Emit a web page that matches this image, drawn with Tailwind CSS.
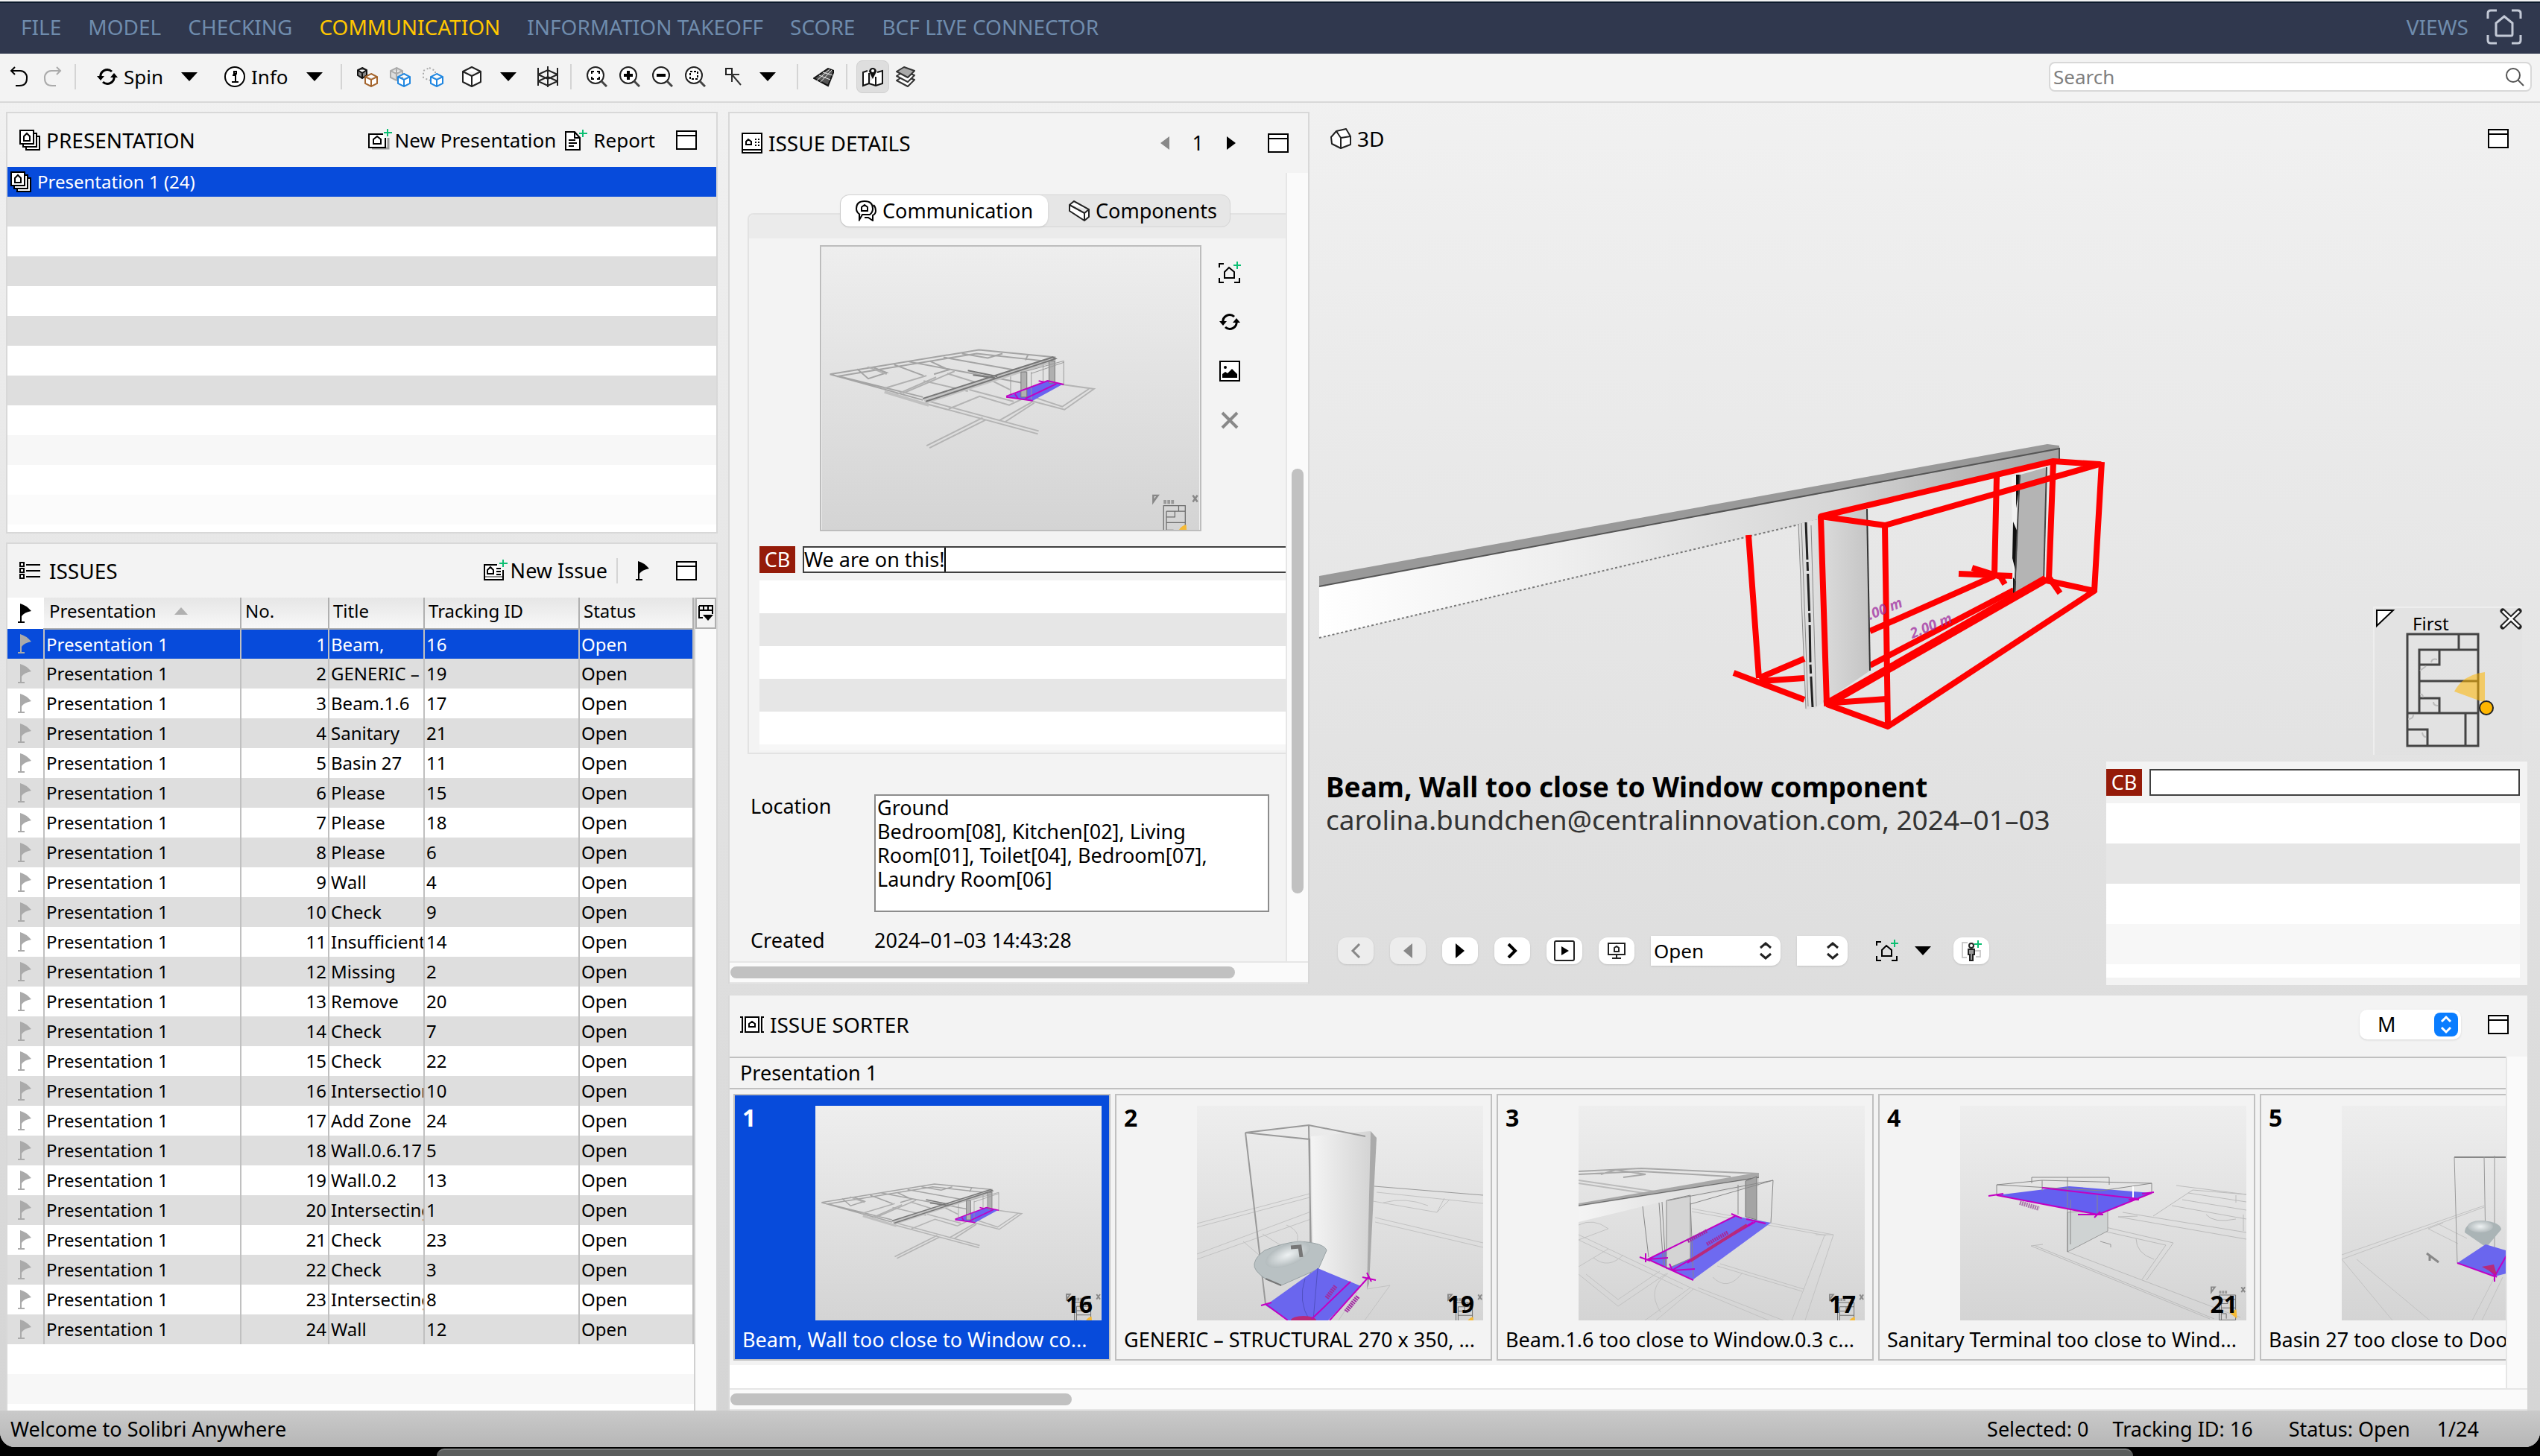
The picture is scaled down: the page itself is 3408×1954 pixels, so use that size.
<!DOCTYPE html>
<html lang="en">
<head>
    <meta charset="UTF-8">
    <meta name="viewport" content="width=device-width, initial-scale=1.0">
    <title>Solibri Anywhere - Communication</title>
    <script src="https://cdn.jsdelivr.net/npm/@tailwindcss/browser@4"></script>
</head>
<body class="bg-black font-['Noto_Sans','Open_Sans',sans-serif] text-[27px] leading-8 text-black">
    <!-- Icon sprite -->
    <svg class="hidden">
        <symbol id="caret" viewBox="0 0 22 12"><path d="M0 0h22L11 12z" fill="currentColor"/></symbol>
        <symbol id="window" viewBox="0 0 28 26"><path d="M1 1h26v24H1zM1 7h26" fill="#fff" stroke="#000" stroke-width="2"/></symbol>
        <symbol id="undo" viewBox="0 0 28 28"><path d="M8 1L3 6l5 5M3 6h12a9 9 0 0 1 9 10q0 10-10 10H9" fill="none" stroke="currentColor" stroke-width="2"/></symbol>
        <symbol id="refresh" viewBox="0 0 28 28"><g fill="none" stroke="currentColor" stroke-width="3"><path d="M5 15a9 9 0 0 1 15-8M23 13a9 9 0 0 1-15 8"/></g><path d="M0 13h10l-5 6zM18 15h10l-5-6z" fill="currentColor"/></symbol>
        <symbol id="info" viewBox="0 0 28 28"><circle cx="14" cy="14" r="13" fill="#fff" stroke="currentColor" stroke-width="2"/><path d="M13 7h3v3h-3zM11 12h4v9M10 21h9" fill="none" stroke="currentColor" stroke-width="2"/></symbol>
        <symbol id="box" viewBox="0 0 28 28"><path d="M14 1l12 6v14l-12 6-12-6V7zM2 7l12 6 12-6M14 13v14" fill="#fff" stroke="#222" stroke-width="2" stroke-linejoin="round"/></symbol>
        <symbol id="boxes-brown" viewBox="0 0 28 28"><path d="M7 2l6 3v7l-6 4-6-4V5zM1 5l6 4 6-4M7 9v7" fill="#888" stroke="#111" stroke-width="2"/><path d="M19 10l8 4v9l-8 4-8-4v-9zM11 14l8 4 8-4M19 18v9" fill="#fff" stroke="#a4642c" stroke-width="2"/></symbol>
        <symbol id="boxes-gray" viewBox="0 0 28 28"><path d="M9 2l8 4v9l-8 4-8-4V6zM1 6l8 4 8-4M9 2v17" fill="#ddd" stroke="#aaa" stroke-width="2"/><path d="M19 10l8 4v9l-8 4-8-4v-9zM11 14l8 4 8-4M19 18v9" fill="#fff" stroke="#1f86e0" stroke-width="2"/></symbol>
        <symbol id="boxes-dotted" viewBox="0 0 28 28"><path d="M9 2l8 4v9l-8 4-8-4V6z" fill="none" stroke="#aaa" stroke-width="2" stroke-dasharray="2 3"/><path d="M19 10l8 4v9l-8 4-8-4v-9zM11 14l8 4 8-4M19 18v9" fill="#fff" stroke="#1f86e0" stroke-width="2"/></symbol>
        <symbol id="section" viewBox="0 0 28 28"><path d="M1 2v24M27 2v24M14 0v28M1 11l13 6 13-6-13-6zM1 20l13 6 13-6M1 20l13-6 13 6" fill="none" stroke="#222" stroke-width="2"/></symbol>
        <symbol id="lens" viewBox="0 0 28 28"><circle cx="12" cy="12" r="11" fill="#fff" stroke="#222" stroke-width="2"/><path d="M20 20l7 7" stroke="#444" stroke-width="3"/></symbol>
        <symbol id="cursor" viewBox="0 0 28 28"><path d="M3 3h8v8H3z" fill="#fff" stroke="#222" stroke-width="2"/><path d="M11 11v10M10 11h11M11 11l12 14" fill="none" stroke="#333" stroke-width="2"/></symbol>
        <symbol id="wedge" viewBox="0 0 28 28"><path d="M1 16L20 3l8 3-8 20z" fill="#555" stroke="#111" stroke-width="2"/><path d="M8 12l15 6M13 8l13 4M10 21L25 5M5 19l17-15" stroke="#eee" stroke-width="1"/></symbol>
        <symbol id="map" viewBox="0 0 28 28"><path d="M7 6L1 8v18l8-3V9M9 23l9 3 9-3V6l-7 2M18 26V14" fill="#fff" stroke="#111" stroke-width="2"/><path d="M14 17L9 7a5 5 0 1 1 10 0z" fill="#111"/><circle cx="14" cy="6" r="2" fill="#fff"/></symbol>
        <symbol id="layers" viewBox="0 0 28 28"><g stroke="#333" stroke-width="2" stroke-linejoin="round"><path d="M2 19l10-6 14 5-9 9z" fill="#fff"/><path d="M2 13l10-6 14 5-9 9z" fill="#fff"/><path d="M2 7l10-6 14 5-9 9z" fill="#aaa"/></g></symbol>
        <symbol id="slides" viewBox="0 0 28 28"><g fill="#fff" stroke="#000" stroke-width="2"><path d="M9 9h18v18H9z"/><path d="M5 5h18v18H5z"/><path d="M1 1h18v18H1z"/><path d="M6 15V9l4-4 4 4v6z"/></g></symbol>
        <symbol id="slides-new" viewBox="0 0 32 30"><path d="M5 26h22V12" fill="none" stroke="#999" stroke-width="3"/><path d="M20 7H1v18h22V12" fill="#fff" stroke="#000" stroke-width="2"/><path d="M7 20v-6l5-4 5 4v6z" fill="none" stroke="#000" stroke-width="2"/><path d="M26 0v10M21 5h11" stroke="#0bbf72" stroke-width="2"/></symbol>
        <symbol id="report" viewBox="0 0 30 30"><path d="M13 4H1v24h19V12zM13 4v8h7" fill="#fff" stroke="#000" stroke-width="2"/><path d="M5 15h9M5 19h11M5 23h7" stroke="#000" stroke-width="2"/><path d="M24 1v10M19 6h11" stroke="#0bbf72" stroke-width="2"/></symbol>
        <symbol id="issue-new" viewBox="0 0 32 30"><path d="M18 7H1v20h25V14" fill="#fff" stroke="#000" stroke-width="2"/><path d="M5 19v-5l4-4 4 4v5zM17 12h6M17 16h6M17 20h6" fill="none" stroke="#000" stroke-width="2"/><path d="M2 23h23" stroke="#888" stroke-width="2"/><path d="M26 0v10M21 5h11" stroke="#0bbf72" stroke-width="2"/></symbol>
        <symbol id="issue" viewBox="0 0 28 28"><path d="M1 1h26v26H1zM1 23h26" fill="#fff" stroke="#000" stroke-width="2"/><path d="M6 16v-4l3-3 4 3v4z" fill="none" stroke="#000" stroke-width="2"/><path d="M18 9h2M22 9h2M18 13h2M22 13h2M18 17h2M22 17h2" stroke="#000" stroke-width="2"/></symbol>
        <symbol id="sorter" viewBox="0 0 32 22"><path d="M0 1h3v20H0M32 1h-3v20h3M7 1h18v20H7z" fill="#fff" stroke="#000" stroke-width="2"/><path d="M12 14v-4l4-3 4 3v4z" fill="none" stroke="#000" stroke-width="2"/></symbol>
        <symbol id="list" viewBox="0 0 28 24"><path d="M1 1h5v5H1zM1 9h5v5H1zM1 17h5v5H1z" fill="#fff" stroke="#000" stroke-width="2"/><path d="M9 4h19M9 12h19M9 20h19" stroke="#000" stroke-width="2"/></symbol>
        <symbol id="flag" viewBox="0 0 18 26"><path d="M3 0q8 2 15 10Q8 12 5 17l0 7h4v2H0v-2h3z" fill="currentColor"/></symbol>
        <symbol id="house" viewBox="0 0 30 30"><path d="M1 8V3h6M1 22v6h6M21 28h7v-6" fill="none" stroke="currentColor" stroke-width="2"/><path d="M8 22v-8l6-6 7 6v8z" fill="none" stroke="currentColor" stroke-width="2"/><path d="M25 0v10M20 5h10" stroke="#0bbf72" stroke-width="2"/></symbol>
        <symbol id="minimap" viewBox="0 0 50 47"><path d="M1 1h5L1 8zM43 1l5 7M48 1l-5 7" fill="none" stroke="#888" stroke-width="2"/><path d="M12 12h23v35H12zM15 18h20M15 18v29M15 30h20M24 18v6h-9M28 12v6M15 38h7v7" fill="none" stroke="#6a6a6a" stroke-width="1"/><path d="M37 45l-9-7q3-5 8-6z" fill="#f5b935"/><path d="M12 8h12" stroke="#999" stroke-width="4" stroke-dasharray="3 1"/></symbol>
    </svg>

    <div class="flex h-screen min-h-[1200px] flex-col">
    <div class="flex min-h-0 flex-1 flex-col overflow-hidden rounded-b-[20px] bg-linear-to-b from-[#f3f3f3] to-[#d4d4d4]">
        <!-- Menu bar -->
        <nav class="flex h-[72px] shrink-0 items-center gap-9 border-t-2 border-[#f3f3f3] bg-[#30384e] pr-6 pb-[2px] pl-7 text-[28px] text-[#6f8cad] shadow-[inset_0_2px_0_#0c1a2c]">
            <a href="#">FILE</a>
            <a href="#">MODEL</a>
            <a href="#">CHECKING</a>
            <a href="#" class="text-[#ffc700]">COMMUNICATION</a>
            <a href="#">INFORMATION TAKEOFF</a>
            <a href="#">SCORE</a>
            <a href="#">BCF LIVE CONNECTOR</a>
            <span class="flex-1"></span>
            <a href="#" class="-mr-3">VIEWS</a>
            <button aria-label="Views layout">
                <svg class="h-12 w-12" viewBox="0 0 48 48" fill="none" stroke="#c3c9d6" stroke-width="3"><path d="M2 13V6q0-4 4-4h8M34 2h8q4 0 4 4v7M2 35v7q0 4 4 4h8M34 46h8q4 0 4-4v-7M13 34V19l11-9 11 9v15q0 2-2 2H15q-2 0-2-2z"/></svg>
            </button>
        </nav>

        <!-- Toolbar -->
        <div class="flex h-[66px] shrink-0 items-center gap-4 border-b-2 border-[#d8d8d8] bg-[#f3f3f3] pr-[11px] pb-[2px] pl-3 text-[26px]">
            <button aria-label="Undo"><svg class="h-7 w-7"><use href="#undo"/></svg></button>
            <button aria-label="Redo" class="-scale-x-100 text-[#aaa]"><svg class="h-7 w-7"><use href="#undo"/></svg></button>
            <span class="h-[34px] w-[2px] bg-[#d4d4d4]"></span>
            <button class="ml-3 flex items-center gap-2"><svg class="h-7 w-7"><use href="#refresh"/></svg>Spin</button>
            <button aria-label="Spin menu" class="mr-9 ml-2"><svg class="h-3 w-[22px]"><use href="#caret"/></svg></button>
            <button class="-ml-4 flex items-center gap-2"><svg class="h-7 w-7"><use href="#info"/></svg>Info</button>
            <button aria-label="Info menu" class="ml-2"><svg class="h-3 w-[22px]"><use href="#caret"/></svg></button>
            <span class="ml-2 h-[34px] w-[2px] bg-[#d4d4d4]"></span>
            <button aria-label="Add to basket" class="ml-1"><svg class="h-7 w-7"><use href="#boxes-brown"/></svg></button>
            <button aria-label="Show selected"><svg class="h-7 w-7"><use href="#boxes-gray"/></svg></button>
            <button aria-label="Hide others"><svg class="h-7 w-7"><use href="#boxes-dotted"/></svg></button>
            <button aria-label="Projection" class="ml-2"><svg class="h-7 w-7"><use href="#box"/></svg></button>
            <button aria-label="Projection menu" class="ml-2"><svg class="h-3 w-[22px]"><use href="#caret"/></svg></button>
            <button aria-label="Sectioning" class="ml-3"><svg class="h-7 w-7"><use href="#section"/></svg></button>
            <span class="h-[34px] w-[2px] bg-[#d4d4d4]"></span>
            <button aria-label="Zoom to fit" class="ml-1"><svg class="h-7 w-7"><use href="#lens"/><path d="M7 10V7h3M14 7h3v3M7 14v3h3M17 14v3h-3" fill="none" stroke="#000" stroke-width="2"/></svg></button>
            <button aria-label="Zoom in"><svg class="h-7 w-7"><use href="#lens"/><path d="M6 12h12M12 6v12" stroke="#000" stroke-width="4"/></svg></button>
            <button aria-label="Zoom out"><svg class="h-7 w-7"><use href="#lens"/><path d="M6 12h12" stroke="#000" stroke-width="4"/></svg></button>
            <button aria-label="Zoom to selection"><svg class="h-7 w-7"><use href="#lens"/><path d="M7 7h10v10H7z" fill="none" stroke="#000" stroke-width="2" stroke-dasharray="3 2"/></svg></button>
            <button aria-label="Select" class="ml-2"><svg class="h-7 w-7"><use href="#cursor"/></svg></button>
            <button aria-label="Select menu" class="ml-1"><svg class="h-3 w-[22px]"><use href="#caret"/></svg></button>
            <span class="ml-3 h-[34px] w-[2px] bg-[#d4d4d4]"></span>
            <button aria-label="Walk" class="ml-1"><svg class="h-7 w-7"><use href="#wedge"/></svg></button>
            <span class="h-[34px] w-[2px] bg-[#d4d4d4]"></span>
            <button aria-label="Map" class="-ml-1 flex h-11 w-11 items-center justify-center rounded-lg border border-[#d0d0d0] bg-[#dedede]"><svg class="h-7 w-7"><use href="#map"/></svg></button>
            <button aria-label="Floors" class="-ml-2"><svg class="h-7 w-7"><use href="#layers"/></svg></button>
            <label class="ml-auto flex h-10 w-[648px] items-center rounded-lg border-2 border-[#d8d8d8] bg-white px-1">
                <input type="text" placeholder="Search" aria-label="Search" class="min-w-0 flex-1 outline-none placeholder:text-[#808080]">
                <svg class="mr-1 h-[26px] w-[26px] text-[#555]" viewBox="0 0 26 26" fill="none" stroke="currentColor" stroke-width="2"><circle cx="11" cy="11" r="9"/><path d="M17 17l8 8"/></svg>
            </label>
        </div>

        <main class="flex min-h-0 flex-1 gap-[14px] pt-3 pr-[17px] pl-2">
            <!-- Left column -->
            <div class="flex w-[955px] shrink-0 flex-col gap-3">
                <section class="flex h-[566px] flex-col border-2 border-[#d8d8d8] bg-[#f3f3f3]">
                    <header class="flex h-[72px] shrink-0 items-center pr-[26px] pl-4 text-[26px]">
                        <svg class="mr-2 h-7 w-7"><use href="#slides"/></svg>
                        <h2 class="flex-1 text-[28px]">PRESENTATION</h2>
                        <button class="flex items-center gap-1"><svg class="h-[30px] w-8"><use href="#slides-new"/></svg>New Presentation</button>
                        <button class="ml-3 flex items-center gap-2"><svg class="h-[30px] w-[30px]"><use href="#report"/></svg>Report</button>
                        <button aria-label="Maximize" class="ml-7"><svg class="h-[26px] w-7"><use href="#window"/></svg></button>
                    </header>
                    <ul class="flex-1 overflow-hidden bg-white text-[24px]">
                        <li class="flex h-10 items-center gap-2 bg-[#074bdb] pl-1 text-white"><svg class="h-7 w-7"><use href="#slides"/></svg>Presentation 1 (24)</li>
                        <li class="h-10 bg-[#dedede]"></li><li class="h-10"></li>
                        <li class="h-10 bg-[#dedede]"></li><li class="h-10"></li>
                        <li class="h-10 bg-[#dedede]"></li><li class="h-10"></li>
                        <li class="h-10 bg-[#dedede]"></li><li class="h-10"></li>
                        <li class="h-10 bg-[#f7f7f7]"></li><li class="h-10"></li>
                        <li class="h-10 bg-[#fbfbfb]"></li>
                    </ul>
                </section>

                <section class="flex min-h-0 flex-1 flex-col border-2 border-b-0 border-[#d8d8d8] bg-[#f3f3f3]">
                    <header class="flex h-[72px] shrink-0 items-center pr-[26px] pl-4">
                        <svg class="mr-3 h-6 w-7"><use href="#list"/></svg>
                        <h2 class="flex-1 text-[28px]">ISSUES</h2>
                        <button class="flex items-center gap-1"><svg class="h-[30px] w-8"><use href="#issue-new"/></svg>New Issue</button>
                        <span class="mr-6 ml-3 h-[34px] w-[2px] bg-[#d4d4d4]"></span>
                        <button aria-label="Flag"><svg class="h-[26px] w-[18px]"><use href="#flag"/></svg></button>
                        <button aria-label="Maximize" class="ml-9"><svg class="h-[26px] w-7"><use href="#window"/></svg></button>
                    </header>
                    <div class="flex min-h-0 flex-1 overflow-hidden bg-white">
                        <div class="min-w-0 flex-1 bg-[repeating-linear-gradient(#fff_0_40px,#f7f7f7_40px_80px)] bg-[position:0_1002px] bg-no-repeat">
                            <table class="w-full table-fixed text-left text-[24px] leading-8">
                                <thead>
                                    <tr class="h-[42px] bg-linear-to-b from-[#e6e6e6] to-[#f8f8f8]">
                                        <th class="w-[49px] bg-white pl-[14px]"><svg class="h-[26px] w-[18px]"><use href="#flag"/></svg></th>
                                        <th class="w-[264px] border-r-2 border-b-2 border-[#b0b0b0] pb-[5px] pl-[7px] font-normal"><span class="flex items-center gap-6">Presentation<svg class="h-[10px] w-[18px] rotate-180 text-[#b0b0b0]" viewBox="0 0 22 12"><use href="#caret"/></svg></span></th>
                                        <th class="w-[118px] border-r-2 border-b-2 border-[#b0b0b0] pb-[5px] pl-[5px] font-normal">No.</th>
                                        <th class="w-32 border-r-2 border-b-2 border-[#b0b0b0] pb-[5px] pl-[5px] font-normal">Title</th>
                                        <th class="w-52 border-r-2 border-b-2 border-[#b0b0b0] pb-[5px] pl-[5px] font-normal">Tracking ID</th>
                                        <th class="border-r-2 border-b-2 border-[#b0b0b0] pb-[5px] pl-[5px] font-normal">Status</th>
                                    </tr>
                                </thead>
                                <tbody id="issueRows">
                                    <!-- Populated by JS -->
                                </tbody>
                            </table>
                        </div>
                        <div class="w-[30px] border-l-2 border-[#d0d0d0] bg-[#fafafa]">
                            <button aria-label="Choose columns" class="flex h-[42px] w-full items-center justify-center border-2 border-[#b0b0b0] bg-[#f3f3f3]">
                                <svg class="h-[22px] w-5" viewBox="0 0 20 22"><path d="M1 1h18v11M1 1v16h5M1 7h18M7 1v6M13 1v6" fill="none" stroke="#000" stroke-width="2"/><path d="M6 13h14l-7 8z"/></svg>
                            </button>
                        </div>
                    </div>
                </section>
            </div>

            <!-- Right side -->
            <div class="flex min-w-0 flex-1 flex-col gap-4">
                <div class="flex h-[1170px] shrink-0">
                    <!-- Issue details -->
                    <section class="z-10 flex w-[780px] shrink-0 flex-col border-2 border-b-0 border-[#d8d8d8] bg-[#f3f3f3]">
                        <header class="flex h-20 shrink-0 items-center pr-[26px] pl-4">
                            <svg class="mr-2 h-7 w-7"><use href="#issue"/></svg>
                            <h2 class="flex-1 text-[28px]">ISSUE DETAILS</h2>
                            <button aria-label="Previous" class="rotate-90 text-[#888]"><svg class="h-3 w-[18px]" viewBox="0 0 18 12"><path d="M0 0h18L9 12z" fill="currentColor"/></svg></button>
                            <span class="mx-7">1</span>
                            <button aria-label="Next" class="-rotate-90"><svg class="h-3 w-[18px]" viewBox="0 0 18 12"><path d="M0 0h18L9 12z" fill="currentColor"/></svg></button>
                            <button aria-label="Maximize" class="ml-10"><svg class="h-[26px] w-7"><use href="#window"/></svg></button>
                        </header>
                        <div class="flex min-h-0 flex-1">
                            <div class="min-w-0 flex-1 overflow-hidden pt-[29px] pl-6">
                                <div class="relative z-10 ml-[124px] flex h-11 w-[524px] items-center rounded-xl border border-[#d4d4d4] bg-[#e6e6e6]">
                                    <button class="flex h-[42px] w-[278px] items-center gap-2 rounded-xl bg-white pl-5 shadow"><svg class="h-7 w-7" viewBox="0 0 28 28" fill="none" stroke="#000" stroke-width="2"><path d="M6 19q-5-3-5-8Q1 1 12 1t11 10q0 5-4 8H9l-4 7v-7M24 6q3 3 3 8 0 4-4 6v7l-6-4h-5M8 14v-5l4-3 4 3v5z"/></svg>Communication</button>
                                    <button class="flex items-center gap-2 pl-7"><svg class="h-7 w-7" viewBox="0 0 28 28" fill="#fff" stroke="#222" stroke-width="2"><path d="M1 6l6-5 20 11v10l-6 5L1 14zM1 6l20 11 6-5M21 17v10"/></svg>Components</button>
                                </div>
                                <div class="-mt-[19px] h-[726px] rounded-tl-lg border-2 border-r-0 border-[#e2e2e2] bg-[#f3f3f3]">
                                    <div class="h-8 rounded-tl-lg bg-[#ebebeb]"></div>
                                    <div class="flex pt-[9px] pl-[95px]">
                                        <svg class="h-96 w-[512px] border-2 border-[#bdbdbd]" viewBox="0 0 512 384"><use href="#scene1"/></svg>
                                        <div class="ml-[23px] flex flex-col items-center gap-9 pt-[22px]">
                                            <button aria-label="Add slide" class="flex h-[30px] items-center"><svg class="h-[30px] w-[30px]"><use href="#house"/></svg></button>
                                            <button aria-label="Update slide" class="flex h-[30px] items-center"><svg class="h-7 w-7"><use href="#refresh"/></svg></button>
                                            <button aria-label="Add picture" class="flex h-[30px] items-center"><svg class="h-7 w-7" viewBox="0 0 28 28"><path d="M1 1h26v26H1z" fill="#fff" stroke="#000" stroke-width="2"/><path d="M4 23v-5l4-3 3 2 6-6 7 7v5z"/><circle cx="8" cy="9" r="2"/></svg></button>
                                            <button aria-label="Delete" class="flex h-[30px] items-center"><svg class="h-6 w-6" viewBox="0 0 24 24"><path d="M2 2l20 20M22 2L2 22" stroke="#888" stroke-width="4"/></svg></button>
                                        </div>
                                    </div>
                                    <div class="mt-[20px] ml-[14px] flex gap-[10px]">
                                        <span class="flex h-9 w-12 items-center justify-center bg-[#951b09] text-white">CB</span>
                                        <div class="flex h-9 flex-1 items-center border-2 border-r-0 border-[#404040] bg-white">
                                            <input type="text" value="We are on this!" aria-label="Comment" class="field-sizing-content outline-none">
                                            <span class="h-full w-[2px] bg-black"></span>
                                        </div>
                                    </div>
                                    <div class="mt-[10px] ml-[14px] h-[228px] bg-white">
                                        <div class="h-11"></div><div class="h-11 bg-[#e6e6e6]"></div>
                                        <div class="h-11"></div><div class="h-11 bg-[#e6e6e6]"></div>
                                        <div class="h-11"></div><div class="h-2 bg-[#f7f7f7]"></div>
                                    </div>
                                </div>
                                <div class="mt-[54px] flex pl-1">
                                    <label for="location" class="w-[166px]">Location</label>
                                    <textarea id="location" class="h-[158px] w-[530px] resize-none overflow-hidden border-2 border-[#8c8c8c] bg-white px-[2px] leading-8">Ground
Bedroom[08], Kitchen[02], Living Room[01], Toilet[04], Bedroom[07], Laundry Room[06]</textarea>
                                </div>
                                <div class="mt-[22px] flex pl-1"><span class="w-[166px]">Created</span><span>2024–01–03 14:43:28</span></div>
                            </div>
                            <div class="w-[30px] border-l-2 border-[#e6e6e6] bg-[#fafafa] px-[6px] pt-[397px]"><div class="h-[570px] w-4 rounded-full bg-[#c1c1c1]"></div></div>
                        </div>
                        <div class="flex h-[30px] shrink-0 border-y-2 border-[#e6e6e6] bg-[#fafafa]">
                            <div class="mt-[5px] ml-[1px] h-4 w-[677px] rounded-full bg-[#c1c1c1]"></div>
                        </div>
                    </section>

                    <!-- 3D view -->
                    <section class="relative flex min-w-0 flex-1 flex-col">
                        <svg class="absolute top-0 left-0 h-[1170px] w-[1634px]" viewBox="1757 150 1634 1170">
                            <defs>
                                <linearGradient id="beam"><stop offset="0" stop-color="#fff"/><stop offset=".3" stop-color="#f0f0f0"/><stop offset=".7" stop-color="#d6d6d6"/><stop offset="1" stop-color="#a4a4a4"/></linearGradient>
                                <linearGradient id="panel"><stop offset="0" stop-color="#e2e2e2"/><stop offset="1" stop-color="#c4c4c4"/></linearGradient>
                            </defs>
                            <!-- beam -->
                            <path d="M1770 787L2763 602v18L2439 698 1770 856z" fill="url(#beam)"/>
                            <path d="M1770 773L2747 596l16 2v5L1770 787z" fill="#999"/>
                            <path d="M1770 787L2763 602v18" fill="none" stroke="#555" stroke-width="2"/>
                            <path d="M1770 856L2439 698" stroke="#777" stroke-width="2" stroke-dasharray="3 3"/>
                            <!-- dimension lines behind the wall -->
                            <g fill="none" stroke="#f00" stroke-width="8">
                                <path d="M2509 847L2676 773M2509 893L2702 792M2628 770l72 3M2646 762l38 12 6 10M2679 640l-3 130"/>
                            </g>
                            <!-- wall panels -->
                            <path d="M2425 700l80-17 4 217-73 50z" fill="url(#panel)"/>
                            <path d="M2505 683l4 217" stroke="#333" stroke-width="2"/>
                            <path d="M2413 703l12-3 12 250-14 3z" fill="#ddd"/>
                            <path d="M2413 703l10 248M2417 702l9 246M2430 705l7 243" fill="none" stroke="#888" stroke-width="1"/>
                            <path d="M2423 701l5 130 1 60 3 58" fill="none" stroke="#222" stroke-width="3" stroke-dasharray="50 3 12 4"/>
                            <path d="M2711 637l35-10-5 153-38 18z" fill="#b4b4b4"/>
                            <path d="M2699 640l12-3-7 161-3 1z" fill="#f2f2f2"/>
                            <path d="M2705 637h6l-2 20-4 25zM2701 700l6 14-2 55-5-20zM2701 775l4 5-1 18h-3z" fill="#111"/>
                            <path d="M2710 637l-7 161" stroke="#444" stroke-width="2"/>
                            <path d="M2746 627l-4 153" stroke="#444" stroke-width="2"/>
                            <!-- component outline -->
                            <g fill="none" stroke="#f00" stroke-width="8" stroke-linejoin="round">
                                <path d="M2443 693L2755 619l62 4L2529 705z"/>
                                <path d="M2755 619l-6 159M2820 620l-10 173M2443 693l8 252M2529 705l4 270M2346 718l14 192"/>
                                <path d="M2451 945l82 30 277-182-69-15"/>
                                <path d="M2451 945L2745 777" stroke-width="11"/>
                                <path d="M2326 903l95 36M2360 910l61-26M2362 914l59-4M2447 944l84-6M2750 776l14 20"/>
                            </g>
                            <g fill="#a02ca0" opacity=".75" font-size="19" font-weight="bold" font-style="italic">
                                <text x="2509" y="832" transform="rotate(-22 2509 832)">.00 m</text>
                                <text x="2566" y="857" transform="rotate(-22 2566 857)">2.00 m</text>
                            </g>
                        </svg>
                        <header class="relative flex h-[72px] items-center pr-[25px] pl-7">
                            <svg class="mr-2 h-7 w-7" viewBox="0 0 28 28" fill="#fff" stroke="#222" stroke-width="2"><path d="M1 12l7-8 13-3 6 10v11l-13 5-12-6zM8 4l6 9v14M14 13l13-2" stroke-linejoin="round"/></svg>
                            <h2 class="flex-1 text-[28px]">3D</h2>
                            <button aria-label="Maximize"><svg class="h-[26px] w-7"><use href="#window"/></svg></button>
                        </header>
                        <div class="relative flex flex-1 items-end justify-between">
                            <div class="pb-[22px] pl-[22px]">
                                <h3 class="text-[37px] leading-11 font-bold">Beam, Wall too close to Window component</h3>
                                <p class="text-[37px] leading-11 text-[#333]">carolina.bundchen@centralinnovation.com, 2024–01–03</p>
                                <div class="mt-[132px] flex h-11 items-center gap-[22px] pl-4 text-[26px]">
                                    <button aria-label="First" class="flex h-9 w-12 items-center justify-center rounded-xl bg-[#ededed] shadow-sm"><svg class="h-5 w-4" viewBox="0 0 16 20"><path d="M13 1L4 10l9 9" fill="none" stroke="#888" stroke-width="3"/></svg></button>
                                    <button aria-label="Previous issue" class="flex h-9 w-12 items-center justify-center rounded-xl bg-[#ededed] shadow-sm"><svg class="h-5 w-3" viewBox="0 0 12 20"><path d="M12 0v20L0 10z" fill="#888"/></svg></button>
                                    <button aria-label="Next issue" class="flex h-9 w-12 items-center justify-center rounded-xl bg-white shadow-sm"><svg class="h-5 w-3" viewBox="0 0 12 20"><path d="M0 0v20l12-10z"/></svg></button>
                                    <button aria-label="Last" class="flex h-9 w-12 items-center justify-center rounded-xl bg-white shadow-sm"><svg class="h-5 w-4" viewBox="0 0 16 20"><path d="M3 1l9 9-9 9" fill="none" stroke="#000" stroke-width="4"/></svg></button>
                                    <button aria-label="Play" class="flex h-9 w-12 items-center justify-center rounded-xl bg-white shadow-sm"><svg class="h-7 w-7" viewBox="0 0 28 28"><rect x="1" y="1" width="26" height="26" rx="2" fill="none" stroke="#222" stroke-width="2"/><path d="M10 8v12l10-6z"/></svg></button>
                                    <button aria-label="Full screen" class="flex h-9 w-12 items-center justify-center rounded-xl bg-white shadow-sm"><svg class="h-6 w-6" viewBox="0 0 24 24"><path d="M1 2h22v15H1zM12 17v5M6 22h12" fill="none" stroke="#222" stroke-width="2"/><path d="M9 13V8l3-2 3 2v5z" fill="none" stroke="#222" stroke-width="2"/></svg></button>
                                    <div class="relative h-10 w-[174px] rounded-r-xl bg-white shadow-sm">
                                        <select aria-label="Status" class="h-full w-full appearance-none pl-1 outline-none"><option>Open</option></select>
                                        <svg class="pointer-events-none absolute top-2 right-3 h-6 w-4" viewBox="0 0 16 24"><path d="M1 8l7-6 7 6M1 16l7 6 7-6" fill="none" stroke="#222" stroke-width="3"/></svg>
                                    </div>
                                    <div class="relative h-10 w-[68px] rounded-r-xl bg-white shadow-sm">
                                        <select aria-label="Assignee" class="h-full w-full appearance-none outline-none"><option></option></select>
                                        <svg class="pointer-events-none absolute top-2 right-3 h-6 w-4" viewBox="0 0 16 24"><path d="M1 8l7-6 7 6M1 16l7 6 7-6" fill="none" stroke="#222" stroke-width="3"/></svg>
                                    </div>
                                    <button aria-label="Add slide" class="ml-4"><svg class="h-[30px] w-[30px]"><use href="#house"/></svg></button>
                                    <button aria-label="Slide menu"><svg class="h-3 w-[22px]"><use href="#caret"/></svg></button>
                                    <button aria-label="Add markup" class="ml-2 flex h-9 w-12 items-center justify-center rounded-xl bg-white shadow-sm"><svg class="h-7 w-7" viewBox="0 0 28 28"><path d="M9 3H2v20h6M19 14h7v8h-6" fill="none" stroke="#ccc" stroke-width="2"/><circle cx="14" cy="7" r="3" fill="none" stroke="#222" stroke-width="2"/><path d="M10 12h8v7h-2v8h-4v-8h-2z" fill="#999" stroke="#222" stroke-width="2"/><path d="M23 0v10M18 5h10" stroke="#0bbf72" stroke-width="2"/></svg></button>
                                </div>
                            </div>
                            <div class="-mb-[2px] flex flex-col items-end">
                                <svg class="mr-[7px] mb-[9px] h-[199px] w-[200px]" viewBox="3184 814 200 199">
                                    <path d="M3184 1013V814h200v199z" fill="#e1e1e1" fill-opacity=".6"/><path d="M3185 1013V815h199" fill="none" stroke="#eee" stroke-width="2"/>
                                    <path d="M3189 819h22l-22 21z" fill="#fff" stroke="#000" stroke-width="2"/>
                                    <path d="M3358 820l22 21M3380 820l-22 21" stroke="#222" stroke-width="7" stroke-linecap="round"/><path d="M3358 820l22 21M3380 820l-22 21" stroke="#fff" stroke-width="3"/>
                                    <text x="3237" y="846" font-size="24">First</text>
                                    <g fill="none" stroke="#444" stroke-width="3">
                                        <path d="M3230 851h95v150h-95zM3299 851v21M3246 956v-84h79M3246 892h27v-20M3246 914h79M3246 937h27v19M3230 957h95M3230 979h27v22M3308 957v44"/>
                                    </g>
                                    <path d="M3247 900l8-6M3262 889q1-6 8-4M3247 932q4-1 4 4M3231 965q7 0 7-6M3250 983q1 6 5 6M3265 942q0 5 6 5" fill="none" stroke="#bbb" stroke-width="2"/>
                                    <path d="M3334 943l-41-15q12-23 41-26z" fill="#ffb600" fill-opacity=".55"/>
                                    <circle cx="3336" cy="950" r="9" fill="#ffb600" stroke="#222" stroke-width="2"/>
                                </svg>
                                <div class="h-[300px] w-[565px] bg-[#f3f3f3] pt-[10px] pr-[10px]">
                                    <div class="flex gap-[10px]">
                                        <span class="flex h-9 w-12 items-center justify-center bg-[#951b09] text-white">CB</span>
                                        <input type="text" aria-label="New comment" class="h-9 min-w-0 flex-1 border-2 border-[#404040] bg-white px-1">
                                    </div>
                                    <div class="mt-[10px] bg-white">
                                        <div class="h-[54px]"></div><div class="h-[54px] bg-[#e6e6e6]"></div>
                                        <div class="h-[54px]"></div><div class="h-[54px] bg-[#f7f7f7]"></div>
                                        <div class="h-[18px]"></div>
                                    </div>
                                </div>
                            </div>
                        </div>
                    </section>
                </div>

                <!-- Issue sorter -->
                <section class="flex min-h-0 flex-1 flex-col border-l-2 border-[#d8d8d8] bg-[#f3f3f3]">
                    <header class="flex h-[82px] shrink-0 items-center pr-[25px] pb-1 pl-[14px]">
                        <svg class="mr-2 h-[22px] w-8"><use href="#sorter"/></svg>
                        <h2 class="flex-1 text-[28px]">ISSUE SORTER</h2>
                        <div class="relative h-10 w-34 rounded-[10px] bg-white shadow">
                            <select aria-label="Thumbnail size" class="h-full w-full appearance-none pl-6 outline-none"><option>M</option></select>
                            <svg class="pointer-events-none absolute top-1 right-1 h-8 w-8" viewBox="0 0 32 32"><rect width="32" height="32" rx="8" fill="#0a7dff"/><path d="M10 12l6-6 6 6M10 20l6 6 6-6" fill="none" stroke="#fff" stroke-width="3"/></svg>
                        </div>
                        <button aria-label="Maximize" class="ml-9"><svg class="h-[26px] w-7"><use href="#window"/></svg></button>
                    </header>
                    <div class="flex min-h-0 flex-1">
                        <div class="min-w-0 flex-1 overflow-hidden">
                            <h3 class="h-11 border-y-2 border-[#c0c0c0] pt-1 pl-[14px]">Presentation 1</h3>
                            <div class="flex h-[370px] gap-[6px] pt-[6px] pl-[5px]" id="cards">
                                <!-- Populated by JS -->
                            </div>
                            <div class="h-full bg-white"></div>
                        </div>
                        <div class="w-[29px] border-l-2 border-[#e6e6e6] bg-[#fafafa]"></div>
                    </div>
                    <div class="flex h-[30px] shrink-0 border-y-2 border-[#e6e6e6] bg-[#fafafa]">
                        <div class="mt-[5px] ml-[1px] h-4 w-[458px] rounded-full bg-[#c1c1c1]"></div>
                    </div>
                </section>
            </div>
        </main>

        <!-- Status bar -->
        <footer class="flex h-[49px] shrink-0 items-center bg-linear-to-b from-[#cacaca] to-[#b6b6b6] pr-[82px] pl-[14px]">
            <span class="flex-1">Welcome to Solibri Anywhere</span>
            <span>Selected: 0</span>
            <span class="ml-8">Tracking ID: 16</span>
            <span class="ml-12">Status: Open</span>
            <span class="ml-9">1/24</span>
        </footer>
    </div>
    <div class="h-3 shrink-0 pt-[2px] pr-[546px] pl-[586px]"><div class="h-[10px] rounded-t-[20px] border-t-2 border-[#7c7e7e] bg-[#5a5d5c]"></div></div>
    </div>

    <!-- Issue snapshots -->
    <svg class="absolute h-0 w-0">
        <defs>
            <linearGradient id="sky" x2="0" y2="1"><stop offset="0" stop-color="#eee"/><stop offset="1" stop-color="#d4d4d4"/></linearGradient>
            <linearGradient id="face"><stop offset="0" stop-color="#f4f4f4"/><stop offset="1" stop-color="#d4d4d4"/></linearGradient>
            <radialGradient id="sink"><stop offset="0" stop-color="#eef2f3"/><stop offset="1" stop-color="#b4bcbe"/></radialGradient>
        </defs>
        <symbol id="scene1" viewBox="0 0 512 384">
            <rect width="512" height="384" fill="url(#sky)"/>
            <g fill="none" stroke="#a4a4a4" stroke-width="2">
                <path d="M11 173L213 140l104 10M20 176l190-31 100 11M11 173l126 35M24 176l113 28M48 166l15 13 25-8-18-7M98 160l40 15M118 156l160 30M146 155l26 12-20 6M165 150l100 18M190 145l35 6 20-6M280 146l-4 8"/>
                <path d="M62 163l26 10M110 199l70-30M82 193l60-18M138 182l60 14M170 172l45 14M215 174l40 20M100 201l55-24" stroke="#b0b0b0"/>
                <path d="M137 212l156 42M142 209l152 41M142 270l76-38M146 273l76-38M240 236l48-27M248 238l40-26M172 220l42-17 40 12 30-14M326 187l43 6-40 28-46-12M362 193l-36 24-36-12M200 194l60 16" stroke="#b4b4b4"/>
                <path d="M85 197l60 18" stroke="#c0c0c0" stroke-width="4"/>
            </g>
            <path d="M137 206L313 150l4 1v5L141 213z" fill="#c4c4c4"/>
            <path d="M137 206L313 150l4 2-176 58M198 168l40 8M205 174l30 4" fill="none" stroke="#777" stroke-width="2"/>
            <path d="M306 182l20 5-40 22-36-5z" fill="#6a62f0"/>
            <path d="M270 170h8v34h-8zM308 155h8v30h-8z" fill="#b0b0b0" stroke="#777"/>
            <path d="M256 176v26M284 170v38M300 160v24M273 170l55-15v32M284 172l44-15" fill="none" stroke="#999"/>
            <path d="M250 204l36 5M250 203l56-21 22 5M276 206l42-20M294 182l8 2M262 200l4 6" fill="none" stroke="#c200c2" stroke-width="2"/>
            <use href="#minimap" x="448" y="336" width="64" height="60"/>
        </symbol>
        <symbol id="scene2" viewBox="0 0 384 288">
            <rect width="384" height="288" fill="url(#sky)"/>
            <g fill="none" stroke="#c2c2c2">
                <path d="M0 158l151-40M0 163l151-40M0 199l153-57M0 206l153-54M62 182l35 30M88 172l40 25M120 160q24 10 10 30M239 150l145 34M239 156l145 34M241 116l143 15M236 128l86 15 17-17M322 143l10-19M250 130q30-8 60 4M228 246l31-5-34 47M215 250l-25 38"/>
                <path d="M238 108l146 12" stroke="#999"/>
            </g>
            <path d="M153 41l80-7-5 212-72-26z" fill="url(#face)"/>
            <path d="M233 34l8 9-10 196-3 7z" fill="#aaa"/>
            <path d="M65 36l85-10 76 15M65 36l86 9 2 241M65 36l27 230M150 26l3 170" fill="none" stroke="#999" stroke-width="2"/>
            <path d="M77 212q2-10 14-18 24-10 46-12 34 2 37 12l-11 25-50 22-20-8q-18-12-16-21z" fill="#b9c1c3" stroke="#98a2a4"/>
            <ellipse cx="122" cy="200" rx="32" ry="14" fill="url(#sink)" transform="rotate(-22 122 200)"/>
            <path d="M92 232l21 9" stroke="#777" stroke-width="2"/>
            <path d="M126 190l12-1 2 14" fill="none" stroke="#777" stroke-width="5"/>
            <path d="M162 218l58 24-44 46h-53l-31-20z" fill="#6a66ee"/>
            <path d="M162 218l-6 70M145 232q-10 30 6 56" fill="none" stroke="#5050c0"/>
            <ellipse cx="143" cy="288" rx="17" ry="6" fill="#b82a7a"/>
            <path d="M231 229l-53 59M206 236l-52 50M92 266l30 22M222 230l18 4M228 224l6 12M86 268l14-4" fill="none" stroke="#c200c2" stroke-width="2"/>
            <path d="M216 256l-16 20M186 242l-12 16" stroke="#a02ca0" stroke-width="6" stroke-dasharray="2 1"/>
            <use href="#minimap" x="336" y="252" width="48" height="46"/>
        </symbol>
        <symbol id="scene3" viewBox="0 0 384 288">
            <rect width="384" height="288" fill="url(#sky)"/>
            <g fill="none" stroke="#c2c2c2">
                <path d="M0 88l84-4 158 7M0 92l84-4 120 7M30 92l20-6 40 6-30 4" stroke="#a8a8a8" stroke-width="2"/>
                <path d="M0 100l110 16M0 104l100 15" stroke="#bbb" stroke-width="2"/>
                <path d="M152 138l190 35-24 0M152 142l180 32M342 173l-38 115M330 174l-44 114M150 244l-61 44M154 246l-50 42M150 244l105 44M160 244l115 44M0 173l150 71M0 180l140 66M0 226l53 43 65-44M10 226l43 34 56-38M0 160q20-10 40 5L0 180M190 212l112 34M186 215l114 34M40 192l-40 24M180 230q20 20 40-6M20 204q20 16 40-4M120 225q-30 20-10 52"/>
            </g>
            <path d="M0 134L242 94v14L120 127 0 156z" fill="url(#face)"/>
            <path d="M0 131L238 90h4v7L0 135z" fill="#a8a8a8"/>
            <path d="M0 134L242 96" stroke="#666"/>
            <path d="M210 148l48 9-104 76-61-27z" fill="#6e6af0"/>
            <path d="M118 127l32-7v85l-32 14z" fill="#d4d4d4" stroke="#888"/>
            <path d="M224 101l15-6v58l-15-4z" fill="#a4a4a4" stroke="#777"/>
            <path d="M86 135l8 68M108 130l6 86M112 129l5 88M150 130l4 100M120 127l141-27-3 57M150 132l111-32M214 106v40" fill="none" stroke="#888"/>
            <path d="M234 156l-88 55M210 148L93 206l61 28M237 156l-112 65M205 145l14 6M225 152l26 6M82 203l14 5M90 198v12M122 212l4 9 30-2M93 206l27-2" fill="none" stroke="#c200c2" stroke-width="2"/>
            <path d="M226 160l-76 48" stroke="#b82a7a" stroke-width="4"/>
            <path d="M172 168l-26 14M200 170l-28 16" stroke="#a02ca0" stroke-width="5" stroke-dasharray="2 1"/>
            <use href="#minimap" x="336" y="252" width="48" height="46"/>
        </symbol>
        <symbol id="scene4" viewBox="0 0 384 288">
            <rect width="384" height="288" fill="url(#sky)"/>
            <g fill="none" stroke="#c2c2c2">
                <path d="M101 188l240 98M95 188l240 98M95 188l16-2M144 196l232 88M178 159l108 25-36 50M178 165l98 22-32 46M178 155v12M236 178q0 20 24 28M259 148l53-35 72 6M290 107l94 12M306 117l78 12M298 126l86 14M284 134l100 18M218 143l166 27M212 149l172 30M212 149l26-1M370 120v10M380 146v22M330 146q10 12 40 6" stroke="#bbb"/>
            </g>
            <path d="M144 143l54-5v30l-54 28z" fill="#cfd3d3" stroke="#999"/>
            <path d="M49 120l97-12 111 9-72 29z" fill="#6460f0"/>
            <path d="M49 120v-14l61-6 147 4v14M49 106l140 8 68-10M96 96h104v10M110 100v14M144 96v100M232 109v17M96 96v8M148 186v-60M184 144v-24" fill="none" stroke="#888"/>
            <path d="M232 108v17" stroke="#fff" stroke-width="2"/>
            <path d="M49 120l136 26 72-29M110 110l130 15M38 121l20-3M158 146h34M180 150l8-8M226 126h14M244 118l16-2" fill="none" stroke="#c200c2" stroke-width="2"/>
            <path d="M80 130l26 8" stroke="#a878a8" stroke-width="6" stroke-dasharray="2 1"/>
            <path d="M188 182l14 4v4" stroke="#999" fill="none"/>
            <use href="#minimap" x="336" y="242" width="48" height="46"/>
        </symbol>
        <symbol id="scene5" viewBox="0 0 384 288">
            <rect width="384" height="288" fill="url(#sky)"/>
            <g fill="none" stroke="#c2c2c2">
                <path d="M0 206l191-70M0 200l191-66M0 206l68 82M20 206l98 82M116 165l40 20M128 158l40 20M116 165l20-8M205 230l-30 58M216 230l-28 58"/>
            </g>
            <path d="M151 69h110" stroke="#888" stroke-width="2"/>
            <path d="M151 69l4 142M191 68l2 118M205 67v160" fill="none" stroke="#999"/>
            <path d="M165 170q0-14 24-16 24 2 25 12l-20 24z" fill="#aab4b6"/>
            <ellipse cx="186" cy="162" rx="17" ry="8" fill="url(#sink)"/>
            <path d="M193 186l27 8 60 16-75 19-50-18z" fill="#6a66ee"/>
            <path d="M155 211l50 18 20-35M198 220l10 10M205 236v-12" fill="none" stroke="#c200c2" stroke-width="2"/>
            <path d="M188 216l16-3 4 14z" fill="#b82a7a"/>
            <path d="M114 198l16 12M118 208v-8" stroke="#888" stroke-width="3"/>
        </symbol>
    </svg>

    <script>
        // [title, tracking id]
        const issues = [
            ['Beam,', 16], ['GENERIC –', 19], ['Beam.1.6', 17], ['Sanitary', 21], ['Basin 27', 11], ['Please', 15],
            ['Please', 18], ['Please', 6], ['Wall', 4], ['Check', 9], ['Insufficient', 14], ['Missing', 2],
            ['Remove', 20], ['Check', 7], ['Check', 22], ['Intersection', 10], ['Add Zone', 24], ['Wall.0.6.17', 5],
            ['Wall.0.2', 13], ['Intersecting', 1], ['Check', 23], ['Check', 3], ['Intersecting', 8], ['Wall', 12]
        ];
        document.getElementById('issueRows').innerHTML = issues.map(([title, id], i) => `
            <tr class="h-10 ${i === 0 ? 'bg-[#074bdb] text-white' : i % 2 ? 'bg-[#dedede]' : 'bg-white'}">
                <td class="border-r-2 border-[#c0c0c0] pl-[14px] text-[#aaa]"><svg class="h-[26px] w-[18px]"><use href="#flag"/></svg></td>
                <td class="border-r-2 border-[#c0c0c0] pl-[2px]">Presentation 1</td>
                <td class="border-r-2 border-[#c0c0c0] pr-[2px] text-right">${i + 1}</td>
                <td class="overflow-hidden border-r-2 border-[#c0c0c0] pl-[2px] whitespace-nowrap">${title}</td>
                <td class="border-r-2 border-[#c0c0c0] pl-[2px]">${id}</td>
                <td class="border-r-2 border-[#c0c0c0] pl-[2px]">Open</td>
            </tr>`).join('');

        const cards = [
            ['Beam, Wall too close to Window co...', 16], ['GENERIC – STRUCTURAL 270 x 350, ...', 19],
            ['Beam.1.6 too close to Window.0.3 c...', 17], ['Sanitary Terminal too close to Wind...', 21],
            ['Basin 27 too close to Door.0.3 c...', '']
        ];
        document.getElementById('cards').innerHTML = cards.map(([title, id], i) => `
            <article class="h-[358px] w-[506px] shrink-0 border-2 border-[#c0c0c0] px-[10px] pt-[14px] ${i === 0 ? 'bg-[#074bdb] text-white' : ''}">
                <div class="flex justify-between">
                    <b class="text-[32px] leading-8">${i + 1}</b>
                    <div class="relative">
                        <svg class="h-72 w-96"><use href="#scene${i + 1}"/></svg>
                        <b class="absolute right-3 bottom-1 text-[32px] leading-9 text-black">${id}</b>
                    </div>
                </div>
                <p class="mt-[10px] whitespace-nowrap">${title}</p>
            </article>`).join('');
    </script>
</body>
</html>
